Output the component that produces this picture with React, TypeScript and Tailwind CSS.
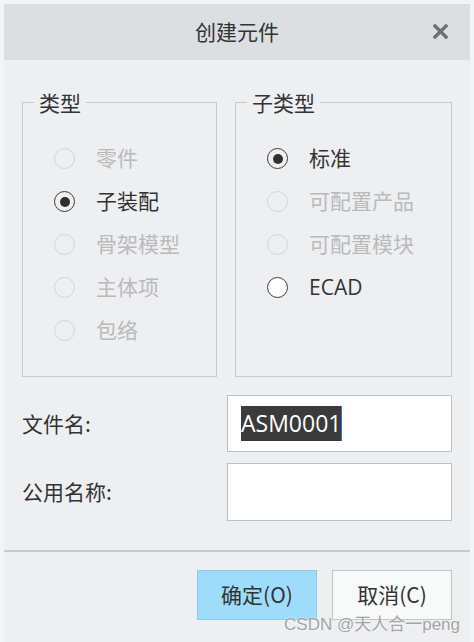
import { useState } from 'react'

type Option = { label: string; disabled?: boolean }

const cjk = "font-['Noto_Sans_CJK_SC','Noto_Sans',sans-serif]"
const latin = "font-['Open_Sans','Noto_Sans_CJK_SC',sans-serif]"

function Radio({
  label,
  checked,
  disabled,
  onSelect
}: Option & { checked: boolean; onSelect: () => void }): React.JSX.Element {
  const ring = disabled
    ? 'border-[#d3d4d6] bg-transparent'
    : checked
      ? 'border-[#3a3a3a] bg-[#eef0f2]'
      : 'border-[#3a3a3a] bg-white'
  return (
    <button
      type="button"
      disabled={disabled}
      onClick={onSelect}
      className="flex h-[43px] items-center gap-[21px] text-left"
    >
      <span
        className={`flex h-[21px] w-[21px] shrink-0 items-center justify-center rounded-full border-[1.5px] ${ring}`}
      >
        {checked && <span className="h-[10px] w-[10px] rounded-full bg-[#2f2f2f]" />}
      </span>
      <span
        className={`text-[21px] leading-none ${latin} ${disabled ? 'text-[#b9babc]' : 'text-[#333]'}`}
      >
        {label}
      </span>
    </button>
  )
}

function Group({
  title,
  options,
  value,
  onChange,
  className
}: {
  title: string
  options: Option[]
  value: string
  onChange: (v: string) => void
  className: string
}): React.JSX.Element {
  return (
    <div
      className={`relative mt-[13px] h-[275px] border border-[#c8c9cb] pl-[31px] pt-[34px] ${className}`}
    >
      {/* caption sits on the top border, like a groupbox legend */}
      <span
        className={`absolute -top-[14px] left-[11px] bg-[#eeeff1] px-[5px] text-[21px] leading-[26px] text-[#333] ${cjk}`}
      >
        {title}
      </span>
      <div className="flex flex-col">
        {options.map((o) => (
          <Radio
            key={o.label}
            {...o}
            checked={value === o.label}
            onSelect={() => onChange(o.label)}
          />
        ))}
      </div>
    </div>
  )
}

const types: Option[] = [
  { label: '零件', disabled: true },
  { label: '子装配' },
  { label: '骨架模型', disabled: true },
  { label: '主体项', disabled: true },
  { label: '包络', disabled: true }
]

const subTypes: Option[] = [
  { label: '标准' },
  { label: '可配置产品', disabled: true },
  { label: '可配置模块', disabled: true },
  { label: 'ECAD' }
]

export default function App(): React.JSX.Element {
  const [type, setType] = useState('子装配')
  const [subType, setSubType] = useState('标准')
  const [commonName, setCommonName] = useState('')

  return (
    <div className={`relative h-[642px] w-[474px] bg-[#f3f4f5] px-1 pt-1 text-left ${cjk}`}>
      <div className="flex h-full flex-col bg-[#eeeff1]">
        {/* title bar */}
        <div className="relative flex h-[56px] shrink-0 items-center justify-center bg-[#dcdfe1]">
          <span className="text-[21px] text-[#333]">创建元件</span>
          <button type="button" className="absolute right-[22px] top-[20px] h-[15px] w-[15px]">
            <svg viewBox="0 0 15 15" className="h-[15px] w-[15px]">
              <path
                d="M2 2 L13 13 M13 2 L2 13"
                stroke="#6f7173"
                strokeWidth="3.4"
                strokeLinecap="square"
              />
            </svg>
          </button>
        </div>

        {/* body */}
        <div className="flex flex-col px-[18px] pt-[29px]">
          <div className="flex gap-[18px]">
            <Group
              title="类型"
              options={types}
              value={type}
              onChange={setType}
              className="w-[195px]"
            />
            <Group
              title="子类型"
              options={subTypes}
              value={subType}
              onChange={setSubType}
              className="w-[217px]"
            />
          </div>

          <div className="mt-[18px] flex flex-col gap-[11px]">
            <div className="flex items-center justify-between">
              <span className="text-[21px] text-[#333]">文件名:</span>
              <div className="flex h-[57px] w-[225px] items-center border border-[#bfc0c2] bg-white pl-[13px]">
                <span
                  className={`flex h-[35px] items-center bg-[#3b3b3b] text-[23px] leading-none text-white ${latin}`}
                >
                  ASM0001
                </span>
                <span className="h-[35px] w-[1px] bg-[#2a7de1]" />
              </div>
            </div>
            <div className="flex items-center justify-between">
              <span className="text-[21px] text-[#333]">公用名称:</span>
              <input
                value={commonName}
                onChange={(e) => setCommonName(e.target.value)}
                className="h-[58px] w-[225px] border border-[#bfc0c2] bg-white px-3 text-[21px] outline-none"
              />
            </div>
          </div>
        </div>

        <div className="mt-[29px] h-[2px] w-full bg-[#c9cacc]" />

        <div className="flex justify-end gap-[15px] px-[18px] pt-[18px]">
          <button
            type="button"
            className="h-[50px] w-[120px] border border-[#86cdf2] bg-[#9edcfc] text-[21px] text-[#333]"
          >
            确定(O)
          </button>
          <button
            type="button"
            className="h-[50px] w-[120px] border border-[#c3c4c6] bg-[#f8f9f9] text-[21px] text-[#333]"
          >
            取消(C)
          </button>
        </div>
      </div>

      {/* watermark */}
      <div className="pointer-events-none absolute right-[14px] top-[616px] font-['Liberation_Sans','Noto_Sans_CJK_SC',sans-serif] text-[17px] leading-none text-[#a3a4a6] [text-shadow:0_0_2px_#fff]">
        CSDN @天人合一peng
      </div>
    </div>
  )
}
